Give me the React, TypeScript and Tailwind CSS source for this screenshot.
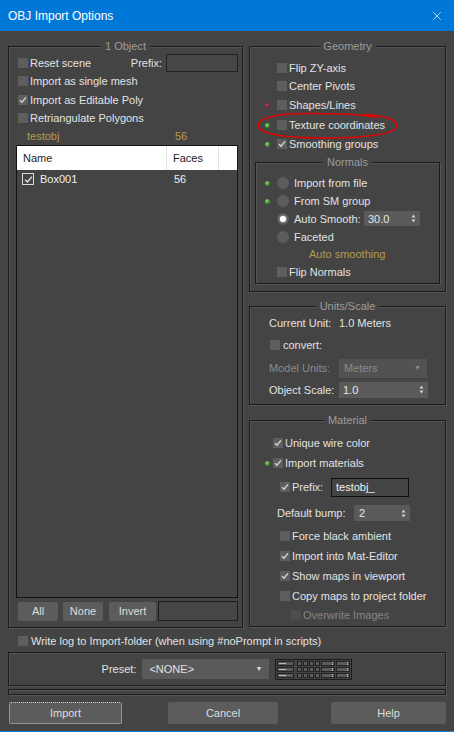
import React from "react";
import { X } from "lucide-react";

type CheckProps = { checked?: boolean; disabled?: boolean };

function Check({ checked = false, disabled = false }: CheckProps) {
  return (
    <span
      className={
        disabled
          ? "w-[10px] h-[10px] shrink-0 bg-[#4d4d4d]"
          : "w-[10px] h-[10px] shrink-0 bg-[#5e5e5e] flex items-center justify-center"
      }
    >
      {checked && (
        <svg width="8" height="8" viewBox="0 0 8 8">
          <path d="M1 4.3 L3 6.3 L7 1.4" stroke="#d6d6d6" strokeWidth="1.4" fill="none" />
        </svg>
      )}
    </span>
  );
}

function Dot({ red = false }: { red?: boolean }) {
  return (
    <span
      className={
        red
          ? "w-[5px] h-[5px] shrink-0 rounded-full bg-[radial-gradient(circle_at_35%_35%,#c0406a,#5a0c28)]"
          : "w-[5px] h-[5px] shrink-0 rounded-full bg-[radial-gradient(circle_at_35%_35%,#7ee060,#1a5a0e)]"
      }
    />
  );
}

function Radio({ on = false }: { on?: boolean }) {
  return (
    <span className="w-[12px] h-[12px] shrink-0 rounded-full bg-[#5c5c5c] flex items-center justify-center">
      {on && <span className="w-[6px] h-[6px] rounded-full bg-white shadow-[0_0_2px_#fff]" />}
    </span>
  );
}

function Arrows() {
  return (
    <svg width="5" height="9" viewBox="0 0 5 9" className="shrink-0">
      <path d="M2.5 0.5 L4.5 3.5 L0.5 3.5 Z" fill="#d0d0d0" />
      <path d="M2.5 8.5 L4.5 5.5 L0.5 5.5 Z" fill="#d0d0d0" />
    </svg>
  );
}

function Legend({ children }: { children: React.ReactNode }) {
  return <legend className="mx-auto px-[4px] bg-[#444444] text-[#9c9c9c]">{children}</legend>;
}

const box =
  "border border-[#1b1b1b] shadow-[inset_1px_1px_0_#555555,1px_1px_0_#555555]";

function PresetGrid() {
  const rows = [2, 8, 14];
  return (
    <svg width="77" height="21" viewBox="0 0 77 21">
      <rect x="0.5" y="0.5" width="76" height="20" fill="#444" stroke="#1a1a1a" />
      {rows.map((y) => (
        <g key={y}>
          <rect x="2.5" y={y + 0.5} width="16" height="4" fill="#5c5c5c" stroke="#222" />
          <line x1="4" y1={y + 2.5} x2="11" y2={y + 2.5} stroke="#b8b8b8" />
          {[22, 28, 34, 40].map((x) => (
            <rect key={x} x={x + 0.5} y={y + 0.5} width="4" height="4" fill="#5c5c5c" stroke="#222" />
          ))}
          <rect x="46.5" y={y + 0.5} width="13" height="4" fill="#5c5c5c" stroke="#222" />
          <rect x="57" y={y + 1} width="1" height="1" fill="#ccc" />
          <rect x="57" y={y + 3} width="1" height="1" fill="#ccc" />
          <rect x="61.5" y={y + 0.5} width="13" height="4" fill="#5c5c5c" stroke="#222" />
          <rect x="72" y={y + 1} width="1" height="1" fill="#ccc" />
          <rect x="72" y={y + 3} width="1" height="1" fill="#ccc" />
        </g>
      ))}
    </svg>
  );
}

export default function App() {
  return (
    <div className="w-[454px] h-[732px] bg-[#444444] flex flex-col border-b border-[#1a7fd6] text-[11px] leading-[14px] text-[#e2e2e2] font-['Liberation_Sans',Arial,sans-serif]">
      {/* title bar */}
      <div className="h-[31px] shrink-0 bg-[#0078d7] flex items-center justify-between pl-[8px] pr-[10px] text-[12px] text-white">
        <span>OBJ Import Options</span>
        <X size={14} strokeWidth={1.2} color="#ffffff" />
      </div>

      <div className="flex flex-col px-[8px] pt-[8px]">
        <div className="flex gap-[6px] items-start">
          {/* left: 1 Object */}
          <fieldset className={`w-[235px] shrink-0 pt-[1px] pb-[6px] ${box}`}>
            <Legend>1 Object</Legend>
            <div className="h-[18px] flex items-center pl-[9px] pr-[4px]">
              <Check />
              <span className="ml-[2px]">Reset scene</span>
              <span className="ml-auto mr-[4px]">Prefix:</span>
              <div className="w-[72px] h-[18px] border border-[#232323] bg-[#464646]" />
            </div>
            <div className="h-[18px] flex items-center pl-[9px]">
              <Check />
              <span className="ml-[2px]">Import as single mesh</span>
            </div>
            <div className="h-[19px] flex items-center pl-[9px]">
              <Check checked />
              <span className="ml-[2px]">Import as Editable Poly</span>
            </div>
            <div className="h-[18px] flex items-center pl-[9px]">
              <Check />
              <span className="ml-[2px]">Retriangulate Polygons</span>
            </div>
            <div className="h-[18px] flex items-center pl-[18px] text-[#b39b4f]">
              <span className="w-[148px]">testobj</span>
              <span>56</span>
            </div>
            <div className="ml-[7px] mr-[4px] h-[453px] border border-[#121212] bg-[#444444] flex flex-col">
              <div className="h-[24px] bg-white flex text-[#1e1e1e]">
                <div className="w-[150px] border-r border-[#e2e2e2] pl-[6px] flex items-center">Name</div>
                <div className="w-[52px] border-r border-[#e2e2e2] pl-[6px] flex items-center">Faces</div>
              </div>
              <div className="h-[18px] flex items-center">
                <div className="w-[150px] flex items-center pl-[5px]">
                  <span className="w-[12px] h-[12px] border border-[#d8d8d8] flex items-center justify-center">
                    <svg width="9" height="9" viewBox="0 0 9 9">
                      <path d="M1 4.6 L3.4 7 L8 1.6" stroke="#e8e8e8" strokeWidth="1.3" fill="none" />
                    </svg>
                  </span>
                  <span className="ml-[6px] text-[#f0f0f0]">Box001</span>
                </div>
                <span className="pl-[7px] text-[#f0f0f0]">56</span>
              </div>
            </div>
            <div className="mt-[3px] h-[20px] flex items-center pl-[9px] pr-[4px]">
              <button className="w-[40px] h-[19px] rounded-[2px] bg-[#5c5c5c] text-[#dcdcdc]">All</button>
              <button className="ml-[5px] w-[40px] h-[19px] rounded-[2px] bg-[#5c5c5c] text-[#dcdcdc]">None</button>
              <button className="ml-[6px] w-[47px] h-[19px] rounded-[2px] bg-[#5c5c5c] text-[#dcdcdc]">Invert</button>
              <div className="ml-auto w-[80px] h-[20px] border border-[#1e1e1e] bg-[#464646]" />
            </div>
          </fieldset>

          {/* right column */}
          <div className="flex-1 flex flex-col">
            <fieldset className={`pt-[6px] pb-[7px] ${box}`}>
              <Legend>Geometry</Legend>
              <div className="h-[18px] flex items-center pl-[27px]">
                <Check />
                <span className="ml-[2px]">Flip ZY-axis</span>
              </div>
              <div className="h-[18px] flex items-center pl-[27px]">
                <Check />
                <span className="ml-[2px]">Center Pivots</span>
              </div>
              <div className="h-[20px] flex items-center pl-[15px]">
                <Dot red />
                <span className="ml-[7px]"><Check /></span>
                <span className="ml-[2px]">Shapes/Lines</span>
              </div>
              <div className="relative h-[20px] flex items-center pl-[15px]">
                <Dot />
                <span className="ml-[7px]"><Check /></span>
                <span className="ml-[2px]">Texture coordinates</span>
                <svg
                  className="absolute left-[5px] top-[-3px] pointer-events-none"
                  width="148"
                  height="28"
                  viewBox="0 0 148 28"
                >
                  <path
                    d="M108 2.5 C128 2.5, 143 8, 142 14 C141 22, 112 26, 72 26 C30 26, 3 22, 3 13.5 C3 6, 22 1.5, 50 1.5 C76 1.5, 100 1.5, 122 5.5"
                    stroke="#e10000"
                    strokeWidth="1.6"
                    fill="none"
                  />
                </svg>
              </div>
              <div className="h-[18px] flex items-center pl-[15px]">
                <Dot />
                <span className="ml-[7px]"><Check checked /></span>
                <span className="ml-[2px]">Smoothing groups</span>
              </div>

              <fieldset className={`mt-[2px] mx-[5px] pt-[5px] pb-[1px] ${box}`}>
                <Legend>Normals</Legend>
                <div className="h-[18px] flex items-center pl-[9px]">
                  <Dot />
                  <span className="ml-[7px]"><Radio /></span>
                  <span className="ml-[5px]">Import from file</span>
                </div>
                <div className="h-[18px] flex items-center pl-[9px]">
                  <Dot />
                  <span className="ml-[7px]"><Radio /></span>
                  <span className="ml-[5px]">From SM group</span>
                </div>
                <div className="h-[17px] flex items-center pl-[21px]">
                  <Radio on />
                  <span className="ml-[5px] w-[70px]">Auto Smooth:</span>
                  <div className="w-[56px] h-[15px] bg-[#5a5a5a] flex items-center pl-[4px] pr-[4px] text-[#e6e6e6]">
                    <span className="flex-1">30.0</span>
                    <Arrows />
                  </div>
                </div>
                <div className="h-[19px] flex items-center pl-[21px]">
                  <Radio />
                  <span className="ml-[5px]">Faceted</span>
                </div>
                <div className="h-[16px] flex items-center pl-[53px] text-[#b39b4f]">Auto smoothing</div>
                <div className="h-[20px] flex items-center pl-[21px]">
                  <Check />
                  <span className="ml-[2px]">Flip Normals</span>
                </div>
              </fieldset>
            </fieldset>

            <fieldset className={`mt-[7px] pb-[4px] ${box}`}>
              <Legend>Units/Scale</Legend>
              <div className="h-[20px] flex items-center pl-[19px]">
                <span className="w-[70px]">Current Unit:</span>
                <span>1.0 Meters</span>
              </div>
              <div className="h-[24px] flex items-center pl-[20px]">
                <Check />
                <span className="ml-[3px]">convert:</span>
              </div>
              <div className="h-[22px] flex items-center pl-[19px]">
                <span className="w-[70px] text-[#8a8a8a]">Model Units:</span>
                <div className="w-[88px] h-[19px] bg-[#525252] flex items-center pl-[5px] pr-[6px] text-[#8c8c8c]">
                  <span className="flex-1">Meters</span>
                  <span className="text-[7px]">▼</span>
                </div>
              </div>
              <div className="h-[21px] flex items-center pl-[19px]">
                <span className="w-[70px]">Object Scale:</span>
                <div className="w-[89px] h-[16px] bg-[#5a5a5a] flex items-center pl-[4px] pr-[4px] text-[#e6e6e6]">
                  <span className="flex-1">1.0</span>
                  <Arrows />
                </div>
              </div>
            </fieldset>

            <fieldset className={`mt-[8px] pt-[7px] pb-[2px] ${box}`}>
              <Legend>Material</Legend>
              <div className="h-[18px] flex items-center pl-[23px]">
                <Check checked />
                <span className="ml-[2px]">Unique wire color</span>
              </div>
              <div className="h-[22px] flex items-center pl-[15px]">
                <Dot />
                <span className="ml-[3px]"><Check checked /></span>
                <span className="ml-[2px]">Import materials</span>
              </div>
              <div className="h-[26px] flex items-center pl-[30px]">
                <Check checked />
                <span className="ml-[2px] w-[39px]">Prefix:</span>
                <div className="w-[78px] h-[19px] border border-[#101010] bg-[#444444] flex items-center pl-[4px] text-[#f2f2f2]">
                  testobj_
                </div>
              </div>
              <div className="h-[26px] flex items-center pl-[27px]">
                <span className="w-[77px]">Default bump:</span>
                <div className="w-[56px] h-[16px] bg-[#5a5a5a] flex items-center pl-[5px] pr-[4px] text-[#e6e6e6]">
                  <span className="flex-1">2</span>
                  <Arrows />
                </div>
              </div>
              <div className="h-[20px] flex items-center pl-[30px]">
                <Check />
                <span className="ml-[2px]">Force black ambient</span>
              </div>
              <div className="h-[20px] flex items-center pl-[30px]">
                <Check checked />
                <span className="ml-[2px]">Import into Mat-Editor</span>
              </div>
              <div className="h-[20px] flex items-center pl-[30px]">
                <Check checked />
                <span className="ml-[2px]">Show maps in viewport</span>
              </div>
              <div className="h-[20px] flex items-center pl-[30px]">
                <Check />
                <span className="ml-[2px]">Copy maps to project folder</span>
              </div>
              <div className="h-[18px] flex items-center pl-[41px] text-[#858585]">
                <Check disabled />
                <span className="ml-[2px]">Overwrite Images</span>
              </div>
            </fieldset>
          </div>
        </div>

        {/* write log */}
        <div className="mt-[4px] h-[18px] flex items-center pl-[10px]">
          <Check />
          <span className="ml-[3px]">Write log to Import-folder (when using #noPrompt in scripts)</span>
        </div>

        {/* preset */}
        <div className={`mt-[2px] h-[34px] flex items-center justify-center gap-[6px] ${box}`}>
          <span>Preset:</span>
          <div className="w-[127px] h-[20px] bg-[#5a5a5a] flex items-center pl-[7px] pr-[7px] text-[#e0e0e0]">
            <span className="flex-1">&lt;NONE&gt;</span>
            <span className="text-[7px]">▼</span>
          </div>
          <PresetGrid />
        </div>

        <div className={`mt-[3px] h-[6px] ${box}`} />

        {/* dialog buttons */}
        <div className="mt-[7px] flex items-center">
          <button className="ml-[1px] w-[113px] h-[22px] rounded-[2px] bg-[#5c5c5c] border border-dotted border-[#c8c8c8] text-[#dcdcdc]">
            Import
          </button>
          <button className="ml-[46px] w-[110px] h-[22px] rounded-[2px] bg-[#5c5c5c] text-[#dcdcdc]">
            Cancel
          </button>
          <button className="ml-[53px] w-[115px] h-[22px] rounded-[2px] bg-[#5c5c5c] text-[#dcdcdc]">
            Help
          </button>
        </div>
      </div>
    </div>
  );
}
